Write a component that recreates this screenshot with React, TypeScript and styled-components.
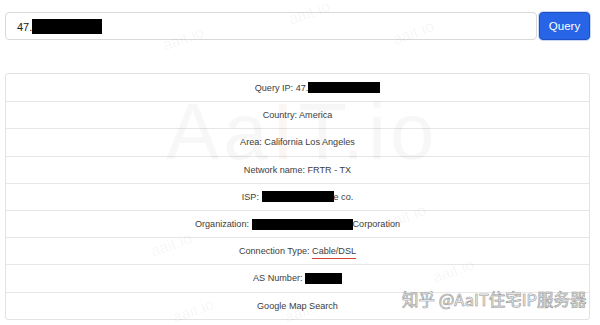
import React from "react";
import styled, { createGlobalStyle } from "styled-components";

const GlobalStyle = createGlobalStyle`
  * {
    box-sizing: border-box;
  }
  html, body {
    margin: 0;
    padding: 0;
    background: #ffffff;
  }
  body {
    font-family: "Liberation Sans", Arial, sans-serif;
    color: #333333;
  }
`;

// box: width of a redaction bar, over: how far it sticks out past the real text
type Part = { text?: string; box?: number; over?: number; line?: boolean };

const rows: Part[][] = [
  [{ text: "Query IP: 47." }, { box: 72, over: 40 }],
  [{ text: "Country: America" }],
  [{ text: "Area: California Los Angeles" }],
  [{ text: "Network name: FRTR - TX" }],
  [{ text: "ISP: " }, { box: 72 }, { text: "e co." }],
  [{ text: "Organization: " }, { box: 101 }, { text: "Corporation" }],
  [{ text: "Connection Type: " }, { text: "Cable/DSL", line: true }],
  [{ text: "AS Number: " }, { box: 37 }],
  [{ text: "Google Map Search" }],
];

const marks = [
  { x: 288, y: 4 },
  { x: 392, y: 24 },
  { x: 162, y: 30 },
  { x: 384, y: 208 },
  { x: 150, y: 236 },
  { x: 432, y: 262 },
  { x: 172, y: 302 },
  { x: 284, y: 302 },
];

function App() {
  return (
    <>
      <GlobalStyle />
      <Page>
        <SearchBar>
          <Input>
            47.
            <Redacted $w={70} $h={15} $over={0} />
          </Input>
          <QueryButton>Query</QueryButton>
        </SearchBar>
        <Table>
          {rows.map((parts, i) => (
            <Row key={i}>
              {parts.map((p, j) =>
                p.box ? (
                  <Redacted key={j} $w={p.box} $h={11} $over={p.over || 0} />
                ) : p.line ? (
                  <Underlined key={j}>{p.text}</Underlined>
                ) : (
                  <span key={j}>{p.text}</span>
                )
              )}
            </Row>
          ))}
        </Table>
        <BigMark>
          Aa<RedI>I</RedI>T.io
        </BigMark>
        {marks.map((m, i) => (
          <SmallMark key={i} style={{ left: m.x, top: m.y }}>
            aait.io
          </SmallMark>
        ))}
        <Credit>知乎 @AaIT住宅IP服务器</Credit>
      </Page>
    </>
  );
}

export default App;

const Page = styled.div`
  position: relative;
  width: 600px;
  height: 325px;
  overflow: hidden;
  padding: 12px 10px 0 5px;
  display: flex;
  flex-direction: column;
  gap: 33px;
`;

const SearchBar = styled.div`
  display: flex;
  align-items: stretch;
  gap: 2px;
  height: 28px;
`;

const Input = styled.div`
  flex: 1;
  display: flex;
  align-items: center;
  padding: 1px 0 0 11px;
  border: 1px solid #d9d9d9;
  border-radius: 4px;
  font-size: 11px;
  color: #222222;
`;

const QueryButton = styled.button`
  width: 51px;
  border: 1px solid #1e4fc4;
  border-radius: 4px;
  background: #2764e6;
  color: #ffffff;
  font-family: "Liberation Sans", Arial, sans-serif;
  font-size: 11.5px;
  padding: 0;
  box-shadow: 0 0 0 1px #c9d8f8;
`;

const Table = styled.div`
  display: flex;
  flex-direction: column;
  width: 585px;
  border: 1px solid #e3e3e3;
  border-radius: 3px;
`;

const Row = styled.div`
  display: flex;
  align-items: center;
  justify-content: center;
  height: 27.2px;
  font-size: 9.1px;
  color: #3d3d3d;
  white-space: pre;
  & + & {
    border-top: 1px solid #e6e6e6;
  }
`;

const Redacted = styled.span<{ $w: number; $h: number; $over: number }>`
  display: inline-block;
  width: ${(p) => p.$w}px;
  height: ${(p) => p.$h}px;
  margin-right: ${(p) => -p.$over}px;
  background: #000000;
`;

const Underlined = styled.span`
  text-decoration: underline;
  text-decoration-color: #d9402f;
  text-decoration-thickness: 1.2px;
  text-underline-offset: 4px;
`;

const BigMark = styled.div`
  position: absolute;
  left: 166px;
  top: 86px;
  font-family: "Liberation Sans", Arial, sans-serif;
  font-size: 80px;
  letter-spacing: 4px;
  color: rgba(0, 0, 0, 0.03);
  pointer-events: none;
`;

const RedI = styled.span`
  color: rgba(220, 40, 30, 0.05);
`;

const SmallMark = styled.div`
  position: absolute;
  font-family: "Liberation Sans", Arial, sans-serif;
  font-size: 16px;
  color: rgba(0, 0, 0, 0.05);
  transform: rotate(-20deg);
  pointer-events: none;
`;

const Credit = styled.div`
  position: absolute;
  left: 402px;
  top: 287px;
  font-family: "Noto Sans CJK SC", "Liberation Sans", sans-serif;
  font-size: 16.5px;
  color: #ffffff;
  -webkit-text-stroke: 0.6px #9a9a9a;
  text-shadow: 0 0 1px rgba(0, 0, 0, 0.25);
  pointer-events: none;
`;
